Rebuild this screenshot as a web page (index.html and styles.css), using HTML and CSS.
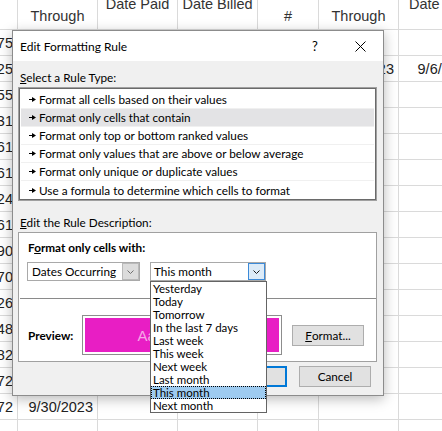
FILE: index.html
```html
<!DOCTYPE html>
<html>
<head>
<meta charset="utf-8">
<title>Edit Formatting Rule</title>
<link rel="stylesheet" href="styles.css">
</head>
<body>

<div class="sheet">
  <div class="cell cell--head"></div><div class="cell cell--head"><span>Through</span></div><div class="cell cell--head cell--top"><span>Date Paid</span></div><div class="cell cell--head cell--top"><span>Date Billed</span></div><div class="cell cell--head"><span>#</span></div><div class="cell cell--head"><span>Through</span></div><div class="cell cell--head cell--top cell--left"><span>Date</span></div>
  <div class="cell">75</div><div class="cell"></div><div class="cell"></div><div class="cell"></div><div class="cell"></div><div class="cell"></div><div class="cell"></div>
  <div class="cell">25</div><div class="cell"></div><div class="cell"></div><div class="cell"></div><div class="cell"></div><div class="cell">9/15/2023</div><div class="cell">9/6/2023</div>
  <div class="cell">55</div><div class="cell"></div><div class="cell"></div><div class="cell"></div><div class="cell"></div><div class="cell"></div><div class="cell"></div>
  <div class="cell">31</div><div class="cell"></div><div class="cell"></div><div class="cell"></div><div class="cell"></div><div class="cell"></div><div class="cell"></div>
  <div class="cell">61</div><div class="cell"></div><div class="cell"></div><div class="cell"></div><div class="cell"></div><div class="cell"></div><div class="cell"></div>
  <div class="cell">61</div><div class="cell"></div><div class="cell"></div><div class="cell"></div><div class="cell"></div><div class="cell"></div><div class="cell"></div>
  <div class="cell">24</div><div class="cell"></div><div class="cell"></div><div class="cell"></div><div class="cell"></div><div class="cell"></div><div class="cell"></div>
  <div class="cell">61</div><div class="cell"></div><div class="cell"></div><div class="cell"></div><div class="cell"></div><div class="cell"></div><div class="cell"></div>
  <div class="cell">90</div><div class="cell"></div><div class="cell"></div><div class="cell"></div><div class="cell"></div><div class="cell"></div><div class="cell"></div>
  <div class="cell">70</div><div class="cell"></div><div class="cell"></div><div class="cell"></div><div class="cell"></div><div class="cell"></div><div class="cell"></div>
  <div class="cell">26</div><div class="cell"></div><div class="cell"></div><div class="cell"></div><div class="cell"></div><div class="cell"></div><div class="cell"></div>
  <div class="cell">48</div><div class="cell"></div><div class="cell"></div><div class="cell"></div><div class="cell"></div><div class="cell"></div><div class="cell"></div>
  <div class="cell">82</div><div class="cell"></div><div class="cell"></div><div class="cell"></div><div class="cell"></div><div class="cell"></div><div class="cell"></div>
  <div class="cell">72</div><div class="cell"></div><div class="cell"></div><div class="cell"></div><div class="cell"></div><div class="cell"></div><div class="cell"></div>
  <div class="cell">72</div><div class="cell">9/30/2023</div><div class="cell"></div><div class="cell"></div><div class="cell"></div><div class="cell"></div><div class="cell"></div>
  <div class="cell"></div><div class="cell"></div><div class="cell"></div><div class="cell"></div><div class="cell"></div><div class="cell"></div><div class="cell"></div>
</div>

<div class="dialog">
  <div class="dialog__title">
    <span class="dialog__caption">Edit Formatting Rule</span>
    <span class="dialog__help">?</span>
    <span class="dialog__close">
      <svg width="11" height="11" viewBox="0 0 11 11"><path d="M0.5 0.5L10.5 10.5M10.5 0.5L0.5 10.5" stroke="#000" stroke-width="1" fill="none"/></svg>
    </span>
  </div>

  <div class="dialog__body">
    <p class="dialog__label"><u>S</u>elect a Rule Type:</p>
    <ul class="rules">
      <li class="rules__item"><svg class="rules__arrow" width="7" height="5" viewBox="0 0 7 5"><rect x="0" y="2" width="4" height="1"/><polygon points="3,0 7,2.5 3,5"/></svg>Format all cells based on their values</li>
      <li class="rules__item rules__item--selected"><svg class="rules__arrow" width="7" height="5" viewBox="0 0 7 5"><rect x="0" y="2" width="4" height="1"/><polygon points="3,0 7,2.5 3,5"/></svg>Format only cells that contain</li>
      <li class="rules__item"><svg class="rules__arrow" width="7" height="5" viewBox="0 0 7 5"><rect x="0" y="2" width="4" height="1"/><polygon points="3,0 7,2.5 3,5"/></svg>Format only top or bottom ranked values</li>
      <li class="rules__item"><svg class="rules__arrow" width="7" height="5" viewBox="0 0 7 5"><rect x="0" y="2" width="4" height="1"/><polygon points="3,0 7,2.5 3,5"/></svg>Format only values that are above or below average</li>
      <li class="rules__item"><svg class="rules__arrow" width="7" height="5" viewBox="0 0 7 5"><rect x="0" y="2" width="4" height="1"/><polygon points="3,0 7,2.5 3,5"/></svg>Format only unique or duplicate values</li>
      <li class="rules__item"><svg class="rules__arrow" width="7" height="5" viewBox="0 0 7 5"><rect x="0" y="2" width="4" height="1"/><polygon points="3,0 7,2.5 3,5"/></svg>Use a formula to determine which cells to format</li>
    </ul>

    <p class="dialog__label dialog__label--desc"><u>E</u>dit the Rule Description:</p>
    <div class="desc">
      <div class="desc__top">
        <p class="desc__heading">F<u>o</u>rmat only cells with:</p>
        <div class="desc__combos">
          <div class="combo combo--first">
            <span>Dates Occurring</span>
            <span class="combo__btn combo__btn--off"><svg width="7" height="4" viewBox="0 0 7 4"><polyline points="0.5,0.5 3.5,3.5 6.5,0.5" fill="none" stroke="#6f6f6f"/></svg></span>
          </div>
          <div class="combo combo--second">
            <span>This month</span>
            <span class="combo__btn combo__btn--open"><svg width="7" height="4" viewBox="0 0 7 4"><polyline points="0.5,0.5 3.5,3.5 6.5,0.5" fill="none" stroke="#1a1a1a"/></svg></span>
            <ul class="droplist">
              <li>Yesterday</li>
              <li>Today</li>
              <li>Tomorrow</li>
              <li>In the last 7 days</li>
              <li>Last week</li>
              <li>This week</li>
              <li>Next week</li>
              <li>Last month</li>
              <li class="droplist__current">This month</li>
              <li>Next month</li>
            </ul>
          </div>
        </div>
      </div>
      <div class="desc__preview">
        <span class="desc__preview-label">Preview:</span>
        <div class="preview"><div class="preview__fill">AaBbCcYyZz</div></div>
        <span class="btn btn--format"><u>F</u>ormat...</span>
      </div>
    </div>

    <div class="dialog__actions">
      <span class="btn btn--default">OK</span>
      <span class="btn">Cancel</span>
    </div>
  </div>
</div>

</body>
</html>
```
FILE: styles.css
```css
/* reset */
body,div,ul,li,p{margin:0;padding:0}
ul{list-style:none}

html,body{background:#fff;}
body{position:relative;width:442px;height:431px;overflow:hidden;font-family:"Liberation Sans",Arial,sans-serif;}

/* sheet behind the dialog */
.sheet{display:grid;grid-template-columns:18px 80px 80px 80px 61px 80px 80px;grid-template-rows:30px;grid-auto-rows:26px;width:479px;font-size:14.5px;color:#222;}
.cell{box-sizing:border-box;border-right:1px solid #dadada;border-bottom:1px solid #dadada;display:flex;align-items:center;justify-content:flex-end;padding:1px 4px 0 0;white-space:nowrap;}
.cell--head{justify-content:center;align-items:flex-end;padding:0 0 5px;line-height:16px;color:#333;}
.cell--top{align-items:flex-start;padding:0;}
.cell--top span{margin-top:-4px;}
.cell--left{justify-content:flex-start;padding-left:10px;}

/* dialog */
.dialog{position:absolute;left:12px;top:30px;width:372px;height:366px;box-sizing:border-box;border:1px solid #8c8c8c;background:#f0f0f0;box-shadow:0 3px 12px rgba(0,0,0,.28);font:11.75px Lato,"Liberation Sans",sans-serif;color:#000;display:flex;flex-direction:column;}
.dialog__title{flex-shrink:0;height:30px;background:#fff;display:flex;align-items:center;padding-left:7px;}
.dialog__caption{flex:1;font-size:12px;}
.dialog__help{width:20px;margin-right:12px;text-align:center;font-size:13px;}
.dialog__close{width:46px;height:30px;display:flex;align-items:center;justify-content:center;}

.dialog__body{padding:0 6px 0 5px;display:flex;flex-direction:column;}
.dialog__label{line-height:14px;margin:10px 0 0 2px;}
.dialog__label--desc{margin-top:15px;}

.rules{margin-top:2px;height:114px;box-sizing:border-box;border:1px solid #a0a0a0;box-shadow:inset 0 0 0 1px #6a6a6a;background:#fff;padding:3px 1px 0;}
.rules__item{height:18px;box-sizing:border-box;margin:0 1px;padding-left:8px;display:flex;align-items:center;gap:3px;border-bottom:1px solid #f0f0f0;}
.rules__item:last-child{border-bottom:0;}
.rules__item--selected{background:#e3e3e5;}
.rules__arrow{flex-shrink:0;fill:#000;}

.desc{margin-top:2px;height:130px;box-sizing:border-box;border:1px solid #a0a0a0;background:#fff;}
.desc__top{margin-left:1px;padding:8px 0 17px 7px;border-bottom:1px solid #8a8a8a;}
.desc__heading{font-weight:700;line-height:14px;padding-left:1px;}
.desc__combos{display:flex;gap:10px;margin-top:7px;}

.combo{position:relative;height:19px;box-sizing:border-box;border:1px solid #a9a9a9;background:#fff;display:flex;align-items:center;padding-left:4px;}
.combo--first{width:113px;}
.combo--second{width:116px;padding-left:3px;}
.combo__btn{margin-left:auto;width:17px;height:17px;box-sizing:border-box;border:1px solid #b9b9b9;display:flex;align-items:center;justify-content:center;}
.combo__btn--off{background:#dcdcdc;}
.combo__btn--open{background:#dcebf8;border-color:#3c8ad8;}

.droplist{position:absolute;left:-1px;top:calc(100% + 1px);width:117px;box-sizing:border-box;border:1px solid #646464;background:#fff;font-size:11.5px;line-height:13px;z-index:2;}
.droplist li{padding-left:2px;}
.droplist__current{background:#9ecbf0;outline:1px dotted #000;outline-offset:-1px;}

.desc__preview{display:flex;align-items:center;padding:16px 0 0 9px;}
.desc__preview-label{width:54px;font-weight:700;}
.preview{width:200px;height:40px;box-sizing:border-box;border:1px solid #8d8d8d;padding:2px;}
.preview__fill{height:100%;background:#e81ec4;color:#f5a9e8;display:flex;align-items:center;justify-content:center;font:15px "Liberation Sans",Arial,sans-serif;}

.btn{width:72px;height:21px;box-sizing:border-box;border:1px solid #adadad;background:#e1e1e1;display:flex;align-items:center;justify-content:center;}
.btn--format{margin-left:10px;}
.btn--default{border:2px solid #0078d7;}

.dialog__actions{display:flex;justify-content:flex-end;gap:12px;margin-top:4px;padding-right:6px;}
```
